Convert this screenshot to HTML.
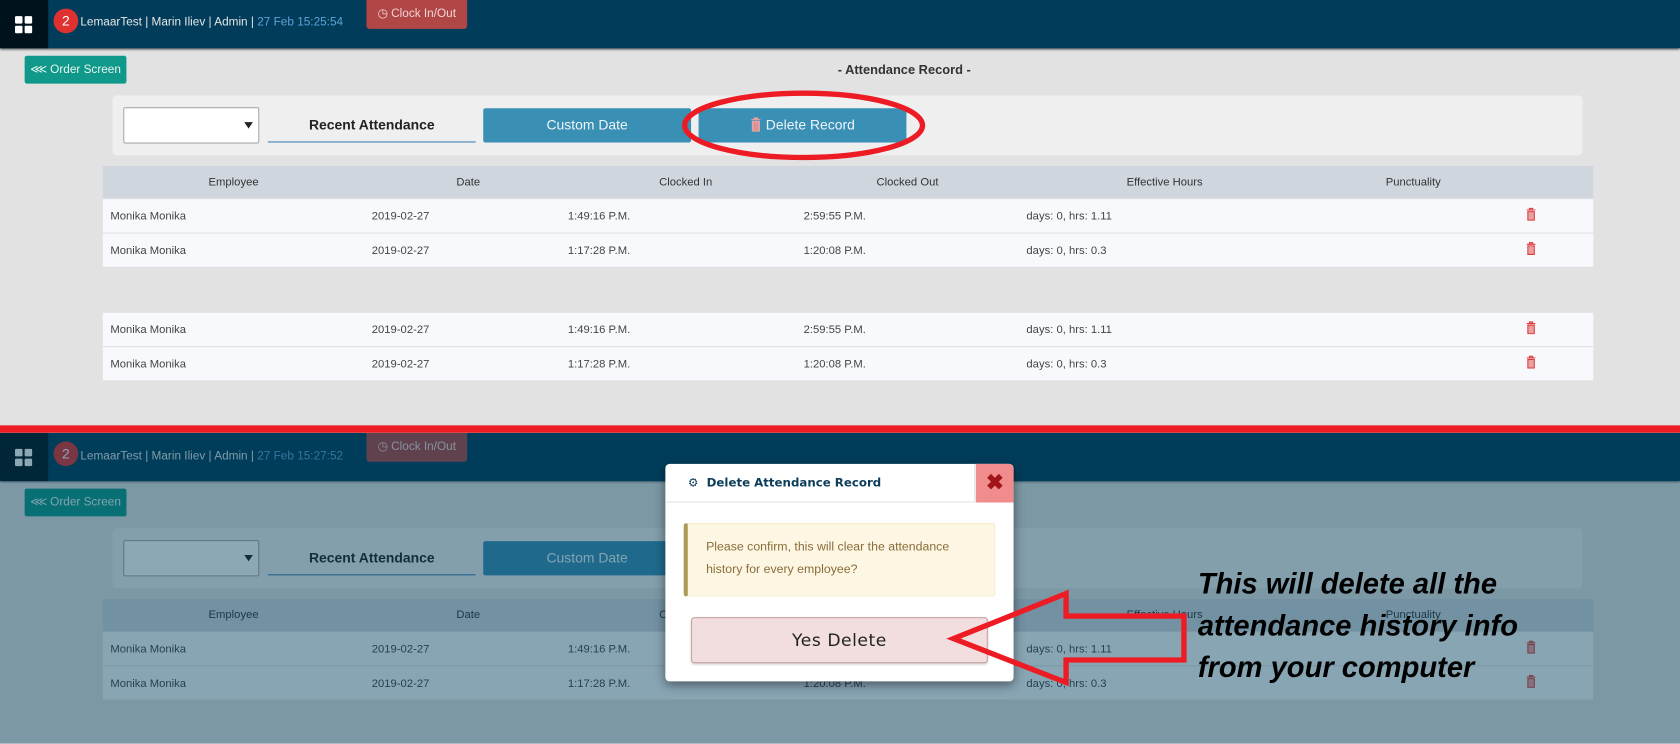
<!DOCTYPE html>
<html><head><meta charset="utf-8"><style>
*{margin:0;padding:0;box-sizing:border-box}
html,body{width:1680px;height:744px;overflow:hidden;background:#e2e2e2;font-family:"Liberation Sans",Arial,sans-serif}
#wrap{position:absolute;left:0;top:0;width:1568px;height:694px;transform:scale(1.07143);transform-origin:0 0;overflow:hidden}
.scr{position:absolute;left:0;width:1568px;background:#e2e2e2;overflow:hidden}
.abs{position:absolute}
.hdr{left:0;top:0;width:1568px;height:45px;background:#013d5a;box-shadow:0 1px 2px #555}
.sq{left:0;top:0;width:45px;height:45px;background:#00131d}
.win{left:14px;top:15px;width:16px;height:16px}
.win i{position:absolute;width:7px;height:7px;background:#fff;border-radius:1px}
.badge{left:50px;top:8px;width:23px;height:23px;border-radius:50%;background:#e03131;color:#fff;font-size:13px;text-align:center;line-height:23px}
.ut{left:75px;top:15px;font-size:11px;color:#e6e6e6;white-space:nowrap}
.ut span{color:#5ea3d6}
.clk{left:342px;top:0;width:94px;height:27px;background:#b04646;color:#f2d6d6;font-size:11px;line-height:27px;text-align:center;border-radius:0 0 3px 3px}
.ord{left:23px;top:52px;width:95px;height:26px;background:#10998a;color:#e8f5f3;font-size:11px;line-height:26px;text-align:center;border-radius:2px}
.ttl{left:0;width:1688px;top:58px;text-align:center;font-size:12px;font-weight:bold;color:#333}
.pnl{left:105px;top:89px;width:1372px;height:56px;background:#efefef;border-radius:4px}
.sel{left:115px;top:100px;width:127px;height:34px;background:#fff;border:1px solid #aaa;border-radius:2px}
.sel:after{content:"";position:absolute;right:5px;top:13px;border:4px solid transparent;border-top:6px solid #222;border-bottom:0}
.rec{left:250px;top:100px;width:194px;height:33px;border-bottom:1px solid #3a7fb5;font-size:13px;font-weight:bold;color:#222;text-align:center;line-height:33px}
.btn{top:101px;width:194px;height:32px;background:#3a8fb5;color:#eef6fa;font-size:13px;text-align:center;line-height:32px;border-radius:2px}
.th{left:96px;top:155px;width:1391px;height:30px;background:#d0d6de}
.th div,.row div{position:absolute;font-size:10.5px;color:#333;white-space:nowrap}
.th div{top:9px;transform:translateX(-50%)}
.row{left:96px;width:1391px;height:31px;background:#f7f9fd}
.row div{top:10px;color:#444}
.tr{width:10px;height:13px}
</style></head><body><div id="wrap">

<div class="scr" style="top:0;height:397px">
 <div class="abs hdr"></div>
 <div class="abs sq"><div class="abs win"><i style="left:0;top:0"></i><i style="left:9px;top:0"></i><i style="left:0;top:9px"></i><i style="left:9px;top:9px"></i></div></div>
 <div class="abs badge">2</div>
 <div class="abs ut">LemaarTest | Marin Iliev | Admin | <span>27 Feb 15:25:54</span></div>
 <div class="abs clk">&#9719; Clock In/Out</div>
 <div class="abs ord">&#8920; Order Screen</div>
 <div class="abs ttl">- Attendance Record -</div>
 <div class="abs pnl"></div>
 <div class="abs sel"></div>
 <div class="abs rec">Recent Attendance</div>
 <div class="abs btn" style="left:451px">Custom Date</div>
 <div class="abs btn" style="left:652px"><svg width="11" height="14" viewBox="0 0 10 13" style="vertical-align:-2px"><path d="M1 2.5h8M3.5 2.5V1h3v1.5M2 4h6v8.5H2z" fill="#e9a0a0" stroke="#e9a0a0" stroke-width="1"/><path d="M4 5v7M6 5v7" stroke="#c97f86" stroke-width=".8"/></svg> Delete Record</div>
 <svg class="abs" style="left:630px;top:80px" width="240" height="76"><ellipse cx="120" cy="37" rx="111" ry="30" fill="none" stroke="#ed1c24" stroke-width="5"/></svg>
 <div class="abs th"><div style="left:122px">Employee</div><div style="left:341px">Date</div><div style="left:544px">Clocked In</div><div style="left:751px">Clocked Out</div><div style="left:991px">Effective Hours</div><div style="left:1223px">Punctuality</div></div>
 <div class="abs row" style="top:186px"><div style="left:7px">Monika Monika</div><div style="left:251px">2019-02-27</div><div style="left:434px">1:49:16 P.M.</div><div style="left:654px">2:59:55 P.M.</div><div style="left:862px">days: 0, hrs: 1.11</div><svg class="abs tr" style="left:1328px;top:7px" viewBox="0 0 10 13"><path d="M1 3h8M3.5 3V1.5h3V3M2 4.5h6v8H2z" fill="#e9a0a0" stroke="#e03b3b" stroke-width="1"/></svg></div>
 <div class="abs row" style="top:218px"><div style="left:7px">Monika Monika</div><div style="left:251px">2019-02-27</div><div style="left:434px">1:17:28 P.M.</div><div style="left:654px">1:20:08 P.M.</div><div style="left:862px">days: 0, hrs: 0.3</div><svg class="abs tr" style="left:1328px;top:7px" viewBox="0 0 10 13"><path d="M1 3h8M3.5 3V1.5h3V3M2 4.5h6v8H2z" fill="#e9a0a0" stroke="#e03b3b" stroke-width="1"/></svg></div>
 <div class="abs row" style="top:292px"><div style="left:7px">Monika Monika</div><div style="left:251px">2019-02-27</div><div style="left:434px">1:49:16 P.M.</div><div style="left:654px">2:59:55 P.M.</div><div style="left:862px">days: 0, hrs: 1.11</div><svg class="abs tr" style="left:1328px;top:7px" viewBox="0 0 10 13"><path d="M1 3h8M3.5 3V1.5h3V3M2 4.5h6v8H2z" fill="#e9a0a0" stroke="#e03b3b" stroke-width="1"/></svg></div>
 <div class="abs row" style="top:324px"><div style="left:7px">Monika Monika</div><div style="left:251px">2019-02-27</div><div style="left:434px">1:17:28 P.M.</div><div style="left:654px">1:20:08 P.M.</div><div style="left:862px">days: 0, hrs: 0.3</div><svg class="abs tr" style="left:1328px;top:7px" viewBox="0 0 10 13"><path d="M1 3h8M3.5 3V1.5h3V3M2 4.5h6v8H2z" fill="#e9a0a0" stroke="#e03b3b" stroke-width="1"/></svg></div>
</div>

<div class="abs" style="left:0;top:397px;width:1568px;height:7px;background:#ed1c24"></div>

<div class="scr" style="top:404px;height:290px">
 <div class="abs hdr"></div>
 <div class="abs sq"><div class="abs win"><i style="left:0;top:0"></i><i style="left:9px;top:0"></i><i style="left:0;top:9px"></i><i style="left:9px;top:9px"></i></div></div>
 <div class="abs badge">2</div>
 <div class="abs ut" style="top:16px">LemaarTest | Marin Iliev | Admin | <span>27 Feb 15:27:52</span></div>
 <div class="abs clk">&#9719; Clock In/Out</div>
 <div class="abs ord">&#8920; Order Screen</div>
 <div class="abs pnl"></div>
 <div class="abs sel"></div>
 <div class="abs rec">Recent Attendance</div>
 <div class="abs btn" style="left:451px">Custom Date</div>
 <div class="abs th"><div style="left:122px">Employee</div><div style="left:341px">Date</div><div style="left:544px">Clocked In</div><div style="left:751px">Clocked Out</div><div style="left:991px">Effective Hours</div><div style="left:1223px">Punctuality</div></div>
 <div class="abs row" style="top:186px"><div style="left:7px">Monika Monika</div><div style="left:251px">2019-02-27</div><div style="left:434px">1:49:16 P.M.</div><div style="left:654px">2:59:55 P.M.</div><div style="left:862px">days: 0, hrs: 1.11</div><svg class="abs tr" style="left:1328px;top:7px" viewBox="0 0 10 13"><path d="M1 3h8M3.5 3V1.5h3V3M2 4.5h6v8H2z" fill="#e9a0a0" stroke="#e03b3b" stroke-width="1"/></svg></div>
 <div class="abs row" style="top:218px"><div style="left:7px">Monika Monika</div><div style="left:251px">2019-02-27</div><div style="left:434px">1:17:28 P.M.</div><div style="left:654px">1:20:08 P.M.</div><div style="left:862px">days: 0, hrs: 0.3</div><svg class="abs tr" style="left:1328px;top:7px" viewBox="0 0 10 13"><path d="M1 3h8M3.5 3V1.5h3V3M2 4.5h6v8H2z" fill="#e9a0a0" stroke="#e03b3b" stroke-width="1"/></svg></div>
 <div class="abs" style="left:0;top:0;width:1568px;height:290px;background:rgba(1,61,90,0.45)"></div>
</div>

<div class="abs" style="left:621px;top:433px;width:325px;height:203px;background:#fff;border-radius:4px;box-shadow:0 3px 10px rgba(0,0,0,.45)">
 <div class="abs" style="left:0;top:35px;width:288px;height:1px;background:#e6e0e6"></div>
 <div class="abs" style="left:21px;top:11px;font-size:11px;font-weight:bold;color:#0d3d5a;font-family:'DejaVu Sans',sans-serif;white-space:nowrap">&#9881;&nbsp; Delete Attendance Record</div>
 <div class="abs" style="left:288px;top:0;width:37px;height:36px;background:#f08c8c;border-radius:0 4px 0 0;border-left:2px solid #e8e8e8;color:#a0141a;font-size:20px;font-weight:bold;text-align:center;line-height:36px">&#10006;</div>
 <div class="abs" style="left:17px;top:55px;width:291px;height:69px;background:#fcf6e2;border:1px solid #f6ecc8;border-left:4px solid #a99a55;border-radius:3px;color:#8a6d3b;font-size:11.5px;line-height:21px;padding:12px 0 0 17px">Please confirm, this will clear the attendance<br>history for every employee?</div>
 <div class="abs" style="left:24px;top:143px;width:277px;height:43px;background:#f2dede;border:1px solid #c7a3a6;border-radius:3px;box-shadow:0 1px 2px rgba(0,0,0,.2);color:#222;font-size:16px;text-align:center;line-height:41px;letter-spacing:.5px;font-family:'DejaVu Sans',sans-serif">Yes Delete</div>
</div>

<svg class="abs" style="left:880px;top:545px" width="235" height="100"><polygon points="10,51 115,9 115,30 225,30 225,71 115,71 115,92" fill="none" stroke="#ed1c24" stroke-width="5" stroke-linejoin="miter"/></svg>

<div class="abs" style="left:1118px;top:525px;width:440px;height:120px;font-size:28px;line-height:39px;font-weight:bold;font-style:italic;color:#000;white-space:nowrap;overflow:hidden;transform:scaleX(.97);transform-origin:0 0">This will delete all the<br>attendance history info<br>from your computer</div>

</div></body></html>
